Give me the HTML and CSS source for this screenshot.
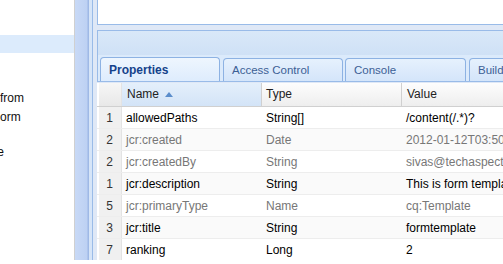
FILE: index.html
```html
<!DOCTYPE html>
<html>
<head>
<meta charset="utf-8">
<link rel="stylesheet" href="styles.css">
</head>
<body>
<div class="left">
  <div class="sel"></div>
  <div class="frag f1">from</div>
  <div class="frag f2">orm</div>
  <div class="frag f3">te</div>
</div>
<div class="splitter"></div>
<div class="right">
  <div class="topbox"></div>
  <div class="hdrbar"></div>
  <div class="tabstrip">
    <div class="tab active">Properties</div>
    <div class="tab">Access Control</div>
    <div class="tab t3">Console</div>
    <div class="tab t4">Build Info</div>
  </div>
  <div class="grid">
    <div class="row head">
      <div class="num"></div>
      <div class="c name sorted">Name <span class="arrow"></span></div>
      <div class="c type">Type</div>
      <div class="c value">Value</div>
    </div>
    <div class="row"><div class="num">1</div><div class="c name">allowedPaths</div><div class="c type">String[]</div><div class="c value">/content(/.*)?</div></div>
    <div class="row prot alt"><div class="num">2</div><div class="c name">jcr:created</div><div class="c type">Date</div><div class="c value">2012-01-12T03:50:15.000</div></div>
    <div class="row prot"><div class="num">2</div><div class="c name">jcr:createdBy</div><div class="c type">String</div><div class="c value">sivas@techaspect.com</div></div>
    <div class="row alt"><div class="num">1</div><div class="c name">jcr:description</div><div class="c type">String</div><div class="c value">This is form template</div></div>
    <div class="row prot"><div class="num">5</div><div class="c name">jcr:primaryType</div><div class="c type">Name</div><div class="c value">cq:Template</div></div>
    <div class="row alt"><div class="num">3</div><div class="c name">jcr:title</div><div class="c type">String</div><div class="c value">formtemplate</div></div>
    <div class="row"><div class="num">7</div><div class="c name">ranking</div><div class="c type">Long</div><div class="c value">2</div></div>
  </div>
</div>
</body>
</html>
```
FILE: styles.css
```css
html, body {
  margin: 0;
  padding: 0;
}
body {
  width: 503px;
  height: 264px;
  overflow: hidden;
  display: flex;
  background: #fff;
  font-family: "Liberation Sans", Arial, sans-serif;
  font-size: 12px;
  color: #000;
}
.left {
  width: 74px;
  height: 260px;
  border-right: 1px solid #d0d0d0;
  background: #fff;
  position: relative;
  flex: none;
}
.sel {
  position: absolute;
  left: 0;
  top: 35px;
  width: 74px;
  height: 18px;
  background: #dcebfc;
}
.frag {
  position: absolute;
  left: 0;
  line-height: 14px;
  color: #111;
}
.f1 { top: 91px; }
.f2 { top: 110px; }
.f3 { top: 145px; left: -6px; }
.splitter {
  width: 17px;
  height: 260px;
  flex: none;
  background: linear-gradient(to right, #c8d9f6 0, #bdd1f3 12px, #9fb9e6 13px, #9fb9e6 14px, #d6e5f8 14px, #d6e5f8 17px);
}
.right {
  flex: 1;
  height: 260px;
  border-left: 1px solid #99bbe8;
  background: #dfe8f6;
  padding-left: 4px;
  display: flex;
  flex-direction: column;
  overflow: hidden;
}
.topbox {
  height: 24px;
  background: #fff;
  border: 1px solid #99bbe8;
  border-top: none;
  border-right: none;
  flex: none;
}
.hdrbar {
  margin-top: 5px;
  height: 24px;
  flex: none;
  border-top: 1px solid #99bbe8;
  border-left: 1px solid #99bbe8;
  background: linear-gradient(to bottom, #d9e8f8, #cfe1f6);
}
.tabstrip {
  height: 26px;
  flex: none;
  display: flex;
  align-items: flex-end;
  padding-left: 2px;
  gap: 3px;
  background: #dbeafb;
  border-bottom: 1px solid #99bbe8;
  border-left: 1px solid #99bbe8;
}
.tab {
  width: 110px;
  height: 22px;
  padding-left: 8px;
  line-height: 22px;
  border: 1px solid #8db2e3;
  border-bottom: none;
  border-radius: 4px 4px 0 0;
  background: linear-gradient(to bottom, #e6f1fd, #d4e5fa);
  color: #3c5f95;
  font-size: 11.5px;
  white-space: nowrap;
  overflow: hidden;
  flex: none;
}
.tab.active {
  font-weight: bold;
  font-size: 12px;
  color: #15428b;
  background: linear-gradient(to bottom, #eef6fe, #deecfd);
  height: 23px;
  line-height: 24px;
}
.tab.t3 { margin-left: -1px; width: 111px; }
.tab.t4 { width: 80px; }
.grid {
  flex: 1;
  background: #fff;
  margin-top: 1px;
}
.row {
  display: flex;
  height: 22px;
  line-height: 22px;
  border-bottom: 1px solid #ededed;
  box-sizing: border-box;
}
.row.alt { background: #fafafa; }
.row.prot .c { color: #777; }
.num {
  width: 25px;
  flex: none;
  box-sizing: border-box;
  background: #f0f0f0;
  border-right: 1px solid #e3e3e3;
  border-left: 2px solid #fff;
  text-align: right;
  padding-right: 8px;
  color: #333;
}
.c {
  padding-left: 4px;
  box-sizing: border-box;
  white-space: nowrap;
  overflow: hidden;
  flex: none;
}
.name { width: 140px; }
.type { width: 140px; }
.value { width: 120px; }
.row.head {
  height: 24px;
  line-height: 23px;
  border-bottom: 1px solid #d0d0d0;
  background: linear-gradient(to bottom, #fdfdfd, #eeeeee);
}
.row.head .num {
  background: linear-gradient(to bottom, #f6f6f6, #e8e8e8);
}
.row.head .c {
  border-right: 1px solid #d0d0d0;
  padding-left: 5px;
  color: #222;
}
.row.head .type { padding-left: 4px; }
.row.head .sorted {
  background: linear-gradient(to bottom, #e4effb, #d3e4f7);
}
.arrow {
  display: inline-block;
  width: 0;
  height: 0;
  border-left: 4px solid transparent;
  border-right: 4px solid transparent;
  border-bottom: 5px solid #5b8dcb;
  margin-left: 3px;
  vertical-align: 1px;
}
```
